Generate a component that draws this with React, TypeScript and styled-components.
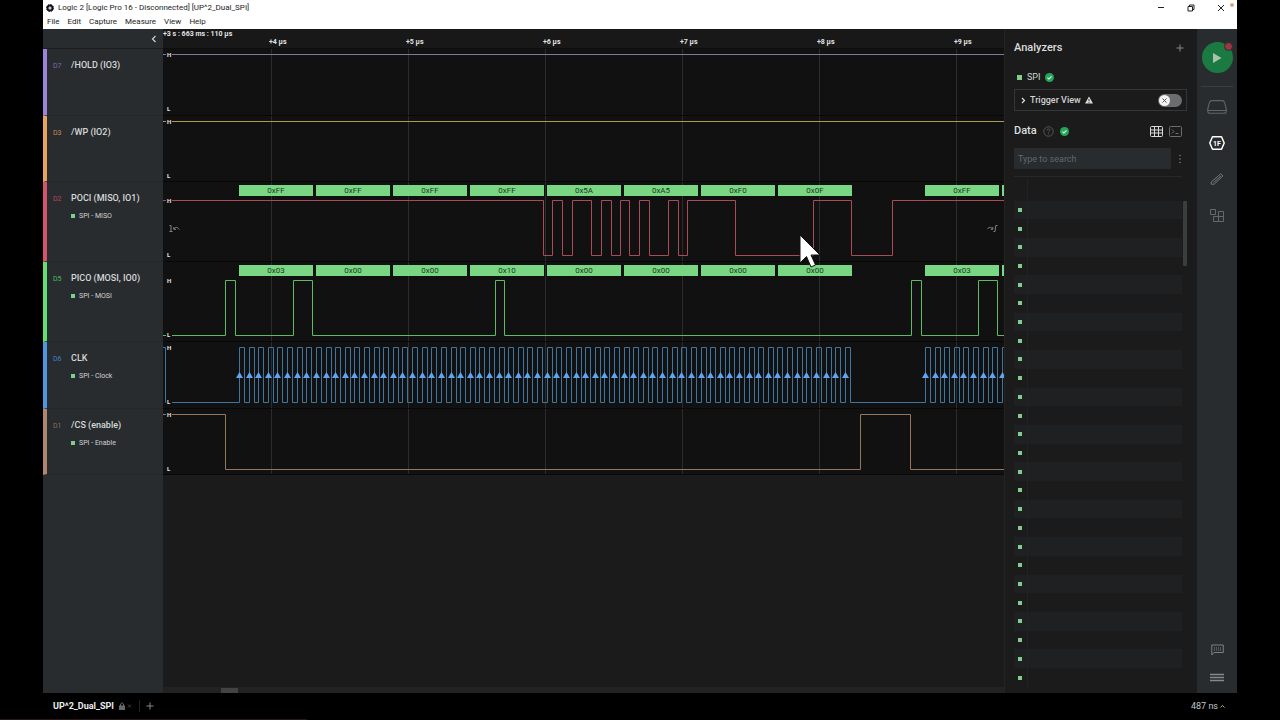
import React from 'react';
import styled, { createGlobalStyle } from 'styled-components';

const GlobalStyle = createGlobalStyle`
  *, *::before, *::after { box-sizing: border-box; }
  body { margin: 0; background: #000; font-family: Roboto, "Liberation Sans", sans-serif; color: #d2d4d5; }
  button { font: inherit; color: inherit; border: 0; padding: 0; margin: 0; background: none; display: flex; align-items: center; justify-content: center; }
  svg { display: block; }
`;

const Page = styled.div`
  display: flex;
  flex-direction: column;
  min-height: 100vh;
  padding: 0 43px;
  background: #000;
`;

const WindowHeader = styled.header`
  height: 29px;
  background: #fff;
  color: #1c1c1c;
  font-size: 8px;
  line-height: 15px;
`;

const TitleBar = styled.div`
  display: flex;
  align-items: center;
  height: 15px;
  padding: 0 0 0 3px;
`;

const Title = styled.h1`
  flex: 1;
  margin: 0 0 0 4px;
  font-size: 8px;
  font-weight: 400;
`;

const WindowButtons = styled.div`
  display: flex;
  align-items: center;
  gap: 17px;
  padding-right: 10px;
`;

const WindowButton = styled.button`
  width: 13px;
  height: 14px;
`;

const RecordingDot = styled.span`
  position: absolute;
  top: 3px;
  right: 46px;
  width: 4px;
  height: 4px;
  border-radius: 50%;
  background: #d8a87c;
`;

const MenuBar = styled.nav`
  display: flex;
  gap: 8px;
  height: 14px;
  padding-left: 4px;
`;

const MenuItem = styled.button`
  height: 14px;
  line-height: 14px;
`;

const Workspace = styled.div`
  flex: 1;
  display: grid;
  grid-template-columns: 120px minmax(0, 1fr) 193px 40px;
`;

const ChannelColumn = styled.aside`
  background: #282c2f;
`;

const ChannelHeader = styled.div`
  display: flex;
  justify-content: flex-end;
  align-items: center;
  height: 20px;
  padding-right: 5px;
  border-bottom: 1px solid #1b1d1f;
`;

const Channel = styled.section<{ $height: number; $color: string }>`
  display: grid;
  grid-template-columns: 18px 1fr;
  align-content: start;
  height: ${p => p.$height}px;
  padding: 10px 0 0 6px;
  border-left: 4px solid ${p => p.$color};
  border-bottom: 1px solid #25282a;
`;

const ChannelId = styled.span<{ $color: string }>`
  font-size: 7px;
  line-height: 14px;
  color: ${p => p.$color};
`;

const ChannelName = styled.h2`
  margin: 0;
  font-size: 9px;
  line-height: 13px;
  font-weight: 500;
  color: #d6d8d9;
`;

const ChannelRole = styled.span`
  grid-column: 2;
  display: flex;
  align-items: center;
  gap: 4px;
  margin-top: 5px;
  font-size: 7px;
  line-height: 10px;
  color: #d0d2d3;
`;

const Marker = styled.span<{ $size?: number }>`
  display: block;
  flex: none;
  width: ${p => p.$size ?? 4}px;
  height: ${p => p.$size ?? 4}px;
  background: #82cd8e;
`;

const Waves = styled.main`
  display: flex;
  flex-direction: column;
  overflow: hidden;
  background: #1b1b1b;
`;

const Ruler = styled.div`
  height: 20px;
  background: #181818;
  color: #e4e4e4;
  font-size: 7px;
  font-weight: 700;
  line-height: 8px;
  border-bottom: 1px solid #0e0e0e;
  white-space: nowrap;
`;

const RulerOrigin = styled.div`
  height: 9px;
  padding-top: 1px;
`;

const Ticks = styled.div`
  display: flex;
  padding-left: 106px;
`;

const Tick = styled.span`
  flex: none;
  width: 137px;
`;

const Lanes = styled.div`
  background: repeating-linear-gradient(to right, #2c2c2c 0 1px, transparent 1px 137px) 108px 0 no-repeat #111;
`;

const Lane = styled.div<{ $height: number }>`
  position: relative;
  height: ${p => p.$height}px;
  border-bottom: 1px solid #080808;
  overflow: hidden;
`;

const Trace = styled.svg`
  width: 100%;
  height: 65px;
`;

const LevelLabel = styled.text`
  fill: #e8e8e8;
  font: 700 6px Roboto, sans-serif;
`;

const Frames = styled.div`
  display: flex;
  gap: 3px;
  height: 13px;
  padding: 3px 0 0 76px;
`;

const Frame = styled.span<{ $afterGap?: boolean }>`
  flex: none;
  width: 74px;
  height: 11px;
  margin-left: ${p => (p.$afterGap ? 70 : 0)}px;
  background: #79d683;
  color: #1d3a21;
  font-size: 8px;
  line-height: 11px;
  text-align: center;
`;

const EdgeJump = styled.button<{ $side: 'left' | 'right' }>`
  position: absolute;
  top: 42px;
  ${p => p.$side}: 6px;
  width: 11px;
  height: 9px;
`;

const ScrollTrack = styled.div`
  height: 6px;
  margin-top: auto;
  padding: 1px 0 0 58px;
  background: #222;
`;

const ScrollThumb = styled.div`
  width: 17px;
  height: 5px;
  background: #434343;
`;

const Panel = styled.aside`
  display: flex;
  flex-direction: column;
  padding: 11px 10px 6px 9px;
  border-left: 1px solid #262222;
  background: #1b1b1b;
`;

const PanelRow = styled.div<{ $gap: number; $top: number; $height: number; $start?: number; $end?: number }>`
  display: flex;
  align-items: center;
  gap: ${p => p.$gap}px;
  height: ${p => p.$height}px;
  margin-top: ${p => p.$top}px;
  padding: 0 ${p => p.$end ?? 0}px 0 ${p => p.$start ?? 0}px;
`;

const PanelTitle = styled.h2`
  margin: 0;
  font-size: 11px;
  line-height: 16px;
  font-weight: 500;
  color: #dcdedf;
`;

const Spacer = styled.span`
  flex: 1;
`;

const AnalyzerName = styled.span`
  font-size: 9px;
`;

const TriggerBox = styled.div`
  display: flex;
  align-items: center;
  gap: 4px;
  height: 22px;
  margin-top: 4px;
  padding: 0 4px 0 6px;
  border: 1px solid #34373a;
  font-size: 9px;
  font-weight: 500;
`;

const Switch = styled.label`
  display: flex;
  position: relative;
`;

const SwitchInput = styled.input`
  appearance: none;
  width: 24px;
  height: 13px;
  margin: 0;
  border-radius: 7px;
  background: #6b6e70;
`;

const SwitchKnob = styled.svg`
  position: absolute;
  left: 1px;
  top: 1px;
`;

const Search = styled.input`
  flex: 1;
  min-width: 0;
  height: 21px;
  padding: 0 4px;
  border: 0;
  border-radius: 1px;
  background: #282c2f;
  color: #d0d0d0;
  font: 9px Roboto, sans-serif;
  &::placeholder { color: #63676a; opacity: 1; }
`;

const Results = styled.div`
  position: relative;
  flex: 1;
  display: flex;
  margin-top: 7px;
  padding-right: 5px;
`;

const ResultTable = styled.table`
  width: 100%;
  border-collapse: collapse;
  border-top: 1px solid #262829;
  th { height: 24px; padding: 0; }
  td { padding: 0; }
  td:first-child, th:first-child { width: 13px; padding-left: 4px; border-right: 1px solid #202223; }
  tbody tr:nth-child(odd) { background: #1e2021; }
`;

const ResultThumb = styled.div`
  position: absolute;
  top: 25px;
  right: 0;
  width: 4px;
  height: 65px;
  border-radius: 1px;
  background: #3c3d3d;
`;

const Rail = styled.nav`
  display: flex;
  flex-direction: column;
  align-items: center;
  padding: 13px 0 8px;
  background: #282c2f;
`;

const StartButton = styled.button`
  position: relative;
  width: 31px;
  height: 31px;
  border-radius: 50%;
  background: #1b7a41;
`;

const StatusDot = styled.span`
  position: absolute;
  top: 0;
  right: 0;
  width: 9px;
  height: 9px;
  border: 1px solid #282c2f;
  border-radius: 50%;
  background: #9b3640;
`;

const RailDivider = styled.hr`
  width: 32px;
  margin: 13px 0 2px;
  border: 0;
  border-top: 1px solid #3a3e41;
`;

const RailButton = styled.button<{ $height?: number }>`
  width: 32px;
  height: ${p => p.$height ?? 36}px;
`;

const StatusBar = styled.footer`
  display: flex;
  align-items: center;
  height: 27px;
  padding: 0 12px 1px 10px;
  font-size: 9px;
`;

const TabName = styled.span`
  margin-right: 5px;
  font-weight: 700;
  color: #eceded;
`;

const TabDivider = styled.span`
  width: 1px;
  height: 12px;
  margin: 0 6px;
  background: #232323;
`;

const Reading = styled.span`
  margin: 0 2px 0 auto;
  color: #c4c4c4;
`;

const Progress = styled.div`
  position: absolute;
  left: 0;
  bottom: 0;
  width: 24%;
  height: 1px;
  background: #2b1517;
`;

const Cursor = styled.svg`
  position: absolute;
  left: 799px;
  top: 234px;
  pointer-events: none;
`;

type ChannelInfo = {
  id: string;
  name: string;
  role?: string;
  color: string;
  idColor: string;
  trace: string;
  height: number;
  start: 0 | 1;
  edges: number[];
  frames?: string[];
  arrows?: number[];
};

/* Rising edges of both clock bursts, in pixels from the left of the capture. */
const burst = (from: number, count: number) =>
  Array.from({ length: count }, (_, i) => Math.round(from + i * 9.615));
const clockRises = [...burst(76, 64), ...burst(762, 12)];
const clockEdges = [2, ...clockRises.flatMap(x => [x, x + 5])];

const channels: ChannelInfo[] = [
  { id: 'D7', name: '/HOLD (IO3)', color: '#9b83dc', idColor: '#7a6bb8', trace: '#7d79a0', height: 67, start: 1, edges: [] },
  { id: 'D3', name: '/WP (IO2)', color: '#e8a45c', idColor: '#c98d50', trace: '#b3975a', height: 66, start: 1, edges: [] },
  {
    id: 'D2', name: 'POCI (MISO, IO1)', role: 'SPI - MISO', color: '#d3546b', idColor: '#b84657', trace: '#a94c58', height: 80, start: 1,
    edges: [380, 389, 399, 409, 428, 438, 448, 457, 466, 476, 486, 505, 515, 524, 572, 650, 688, 729],
    frames: ['0xFF', '0xFF', '0xFF', '0xFF', '0x5A', '0xA5', '0xF0', '0x0F', '0xFF', ''],
  },
  {
    id: 'D5', name: 'PICO (MOSI, IO0)', role: 'SPI - MOSI', color: '#5fe070', idColor: '#4fbc5f', trace: '#5dbb66', height: 80, start: 0,
    edges: [62, 72, 130, 149, 332, 341, 748, 758, 815, 834],
    frames: ['0x03', '0x00', '0x00', '0x10', '0x00', '0x00', '0x00', '0x00', '0x03', ''],
  },
  { id: 'D6', name: 'CLK', role: 'SPI - Clock', color: '#4f96e0', idColor: '#457fc8', trace: '#3f76a0', height: 67, start: 1, edges: clockEdges, arrows: clockRises },
  { id: 'D1', name: '/CS (enable)', role: 'SPI - Enable', color: '#b18670', idColor: '#86705f', trace: '#94765e', height: 66, start: 1, edges: [62, 697, 747] },
];

const HIGH = 5;
const LOW = 60;

function tracePath(start: 0 | 1, edges: number[]) {
  let level = start;
  let d = `M0 ${level ? HIGH : LOW}.5`;
  edges.forEach(x => {
    level = level ? 0 : 1;
    d += `H${x}.5V${level ? HIGH : LOW}.5`;
  });
  return d + 'H4000';
}

const CheckBadge = () => (
  <svg width="9" height="9" viewBox="0 0 18 18" aria-label="ok">
    <circle cx="9" cy="9" r="9" fill="#25a55a" />
    <path d="M5 9.3l2.8 2.8L13 6.6" fill="none" stroke="#eafff0" strokeWidth="2.2" />
  </svg>
);

const PlusIcon = () => (
  <svg width="8" height="8" viewBox="0 0 8 8"><path d="M4 .5v7M.5 4h7" stroke="#85898b" /></svg>
);

const JumpIcon = ({ flip }: { flip?: boolean }) => (
  <svg width="11" height="9" viewBox="0 0 11 9" fill="none" stroke="#8e8e8e" strokeWidth=".9">
    {flip
      ? <path d="M.5 5C2 2.800 4 2.800 5.500 5M5.800 3v2.300H3.800M6.500 7.500h1.500l.8-6h1.700" />
      : <path d="M.5 1.500h1.500v6M.5 7.500h3M5 5C6.500 2.800 8.500 2.800 10.200 5.500M4.800 3v2.300h2.200" />}
  </svg>
);

export default function App() {
  return (
    <Page>
      <GlobalStyle />
      <WindowHeader>
        <TitleBar>
          <svg width="8" height="8" viewBox="0 0 16 16">
            <circle cx="8" cy="8" r="5" fill="none" stroke="#15151f" strokeWidth="4" />
            <circle cx="8" cy="8" r="7" fill="none" stroke="#15151f" strokeWidth="2" strokeDasharray="3 2.500" />
            <circle cx="8" cy="8" r="2" fill="#b9b0cf" />
          </svg>
          <Title>Logic 2 [Logic Pro 16 - Disconnected] [UP^2_Dual_SPI]</Title>
          <WindowButtons>
            <WindowButton aria-label="Minimize">
              <svg width="8" height="8" viewBox="0 0 8 8"><path d="M1 3.500h6" stroke="#222" /></svg>
            </WindowButton>
            <WindowButton aria-label="Restore">
              <svg width="8" height="8" viewBox="0 0 8 8" fill="none" stroke="#222"><path d="M1 2.500h4.500V7H1zM2.500 2.500V1H7v4.500H5.500" /></svg>
            </WindowButton>
            <WindowButton aria-label="Close">
              <svg width="8" height="8" viewBox="0 0 8 8"><path d="M1 1l6 6M7 1L1 7" stroke="#222" /></svg>
            </WindowButton>
          </WindowButtons>
          <RecordingDot />
        </TitleBar>
        <MenuBar>
          {['File', 'Edit', 'Capture', 'Measure', 'View', 'Help'].map(item => <MenuItem key={item}>{item}</MenuItem>)}
        </MenuBar>
      </WindowHeader>

      <Workspace>
        <ChannelColumn>
          <ChannelHeader>
            <button aria-label="Collapse channels">
              <svg width="8" height="8" viewBox="0 0 8 8"><path d="M5.500 1L2.500 4l3 3" fill="none" stroke="#d0d2d3" strokeWidth="1.200" /></svg>
            </button>
          </ChannelHeader>
          {channels.map(c => (
            <Channel key={c.id} $height={c.height} $color={c.color}>
              <ChannelId $color={c.idColor}>{c.id}</ChannelId>
              <ChannelName>{c.name}</ChannelName>
              {c.role && <ChannelRole><Marker />{c.role}</ChannelRole>}
            </Channel>
          ))}
        </ChannelColumn>

        <Waves>
          <Ruler>
            <RulerOrigin>+3 s : 663 ms : 110 µs</RulerOrigin>
            <Ticks>
              {[4, 5, 6, 7, 8, 9].map(n => <Tick key={n}>+{n} µs</Tick>)}
            </Ticks>
          </Ruler>
          <Lanes>
            {channels.map(c => (
              <Lane key={c.id} $height={c.height}>
                {c.frames && (
                  <Frames>
                    {c.frames.map((f, i) => <Frame key={i} $afterGap={i === 8}>{f}</Frame>)}
                  </Frames>
                )}
                <Trace>
                  <path d={tracePath(c.start, c.edges)} fill="none" stroke={c.trace} />
                  {c.arrows?.map(x => <path key={x} d={`M${x + 0.5} 30l3.500 6h-7z`} fill="#62a4ee" />)}
                  <rect x="3" y="2" width="6" height="7" fill="#111" />
                  <rect x="3" y="57" width="6" height="7" fill="#111" />
                  <LevelLabel x="4" y="8">H</LevelLabel>
                  <LevelLabel x="4" y="62">L</LevelLabel>
                </Trace>
                {c.id === 'D2' && (
                  <>
                    <EdgeJump $side="left" aria-label="Previous edge"><JumpIcon /></EdgeJump>
                    <EdgeJump $side="right" aria-label="Next edge"><JumpIcon flip /></EdgeJump>
                  </>
                )}
              </Lane>
            ))}
          </Lanes>
          <ScrollTrack><ScrollThumb /></ScrollTrack>
        </Waves>

        <Panel>
          <PanelRow $gap={4} $top={0} $height={16} $end={3}>
            <PanelTitle>Analyzers</PanelTitle>
            <Spacer />
            <button aria-label="Add analyzer"><PlusIcon /></button>
          </PanelRow>
          <PanelRow $gap={5} $top={13} $height={16} $start={3}>
            <Marker $size={5} />
            <AnalyzerName>SPI</AnalyzerName>
            <CheckBadge />
          </PanelRow>
          <TriggerBox>
            <svg width="5" height="7" viewBox="0 0 5 7"><path d="M1 1l2.500 2.500L1 6" fill="none" stroke="#e0e0e0" strokeWidth="1.200" /></svg>
            <span>Trigger View</span>
            <svg width="8" height="8" viewBox="0 0 16 16"><path d="M8 1l8 14H0z" fill="#dcdcdc" /><path d="M8 6v4.500M8 12v1.700" stroke="#1b1b1b" strokeWidth="1.800" /></svg>
            <Spacer />
            <Switch>
              <SwitchInput type="checkbox" role="switch" aria-label="Trigger View" />
              <SwitchKnob width="11" height="11" viewBox="0 0 22 22">
                <circle cx="11" cy="11" r="11" fill="#f2f2f2" />
                <path d="M7 7l8 8M15 7l-8 8" stroke="#555" strokeWidth="2" />
              </SwitchKnob>
            </Switch>
          </TriggerBox>
          <PanelRow $gap={6} $top={12} $height={16} $end={5}>
            <PanelTitle>Data</PanelTitle>
            <svg width="11" height="11" viewBox="0 0 22 22" fill="none" stroke="#606466" strokeWidth="1.600">
              <circle cx="11" cy="11" r="9.500" />
              <path d="M8 9c0-4 6-4 6-.500 0 2.200-3 2-3 4.500M11 15v2" />
            </svg>
            <CheckBadge />
            <Spacer />
            <button aria-label="Table view">
              <svg width="13" height="11" viewBox="0 0 13 11" fill="none" stroke="#d8dadb">
                <rect x=".5" y=".5" width="12" height="10" rx="1" /><path d="M.5 4h12M.5 7h12M4.500.5v10M8.500.5v10" />
              </svg>
            </button>
            <button aria-label="Terminal view">
              <svg width="13" height="11" viewBox="0 0 13 11" fill="none" stroke="#6a6e70">
                <rect x=".5" y=".5" width="12" height="10" rx="1" /><path d="M3 3.500l2 2-2 2M6.500 7.500h3" />
              </svg>
            </button>
          </PanelRow>
          <PanelRow $gap={7} $top={9} $height={21} $end={5}>
            <Search placeholder="Type to search" aria-label="Search data" />
            <button aria-label="More">
              <svg width="4" height="10" viewBox="0 0 4 10" fill="#777b7d"><circle cx="2" cy="1.500" r=".8" /><circle cx="2" cy="5" r=".8" /><circle cx="2" cy="8.500" r=".8" /></svg>
            </button>
          </PanelRow>
          <Results>
            <ResultTable>
              <thead><tr><th /><th /></tr></thead>
              <tbody>
                {Array.from({ length: 26 }, (_, i) => <tr key={i}><td><Marker /></td><td /></tr>)}
              </tbody>
            </ResultTable>
            <ResultThumb />
          </Results>
        </Panel>

        <Rail>
          <StartButton aria-label="Start">
            <svg width="10" height="10" viewBox="0 0 10 10"><path d="M1 0l8.500 5L1 10z" fill="#a9c3ad" /></svg>
            <StatusDot />
          </StartButton>
          <RailDivider />
          <RailButton aria-label="Device">
            <svg width="20" height="14" viewBox="0 0 20 14" fill="none" stroke="#5f6467" strokeWidth="1.100">
              <path d="M5 .6h10q2 0 2.600 2L19.300 9v2q0 2.300-2.300 2.300H3Q.7 13.300.7 11V9l1.700-6.400Q3 .6 5 .6zM.7 9.300q0 1.200 1.500 1.200h15.600q1.500 0 1.500-1.200" />
            </svg>
          </RailButton>
          <RailButton aria-label="Analyzers">
            <svg width="16" height="14" viewBox="0 0 16 14">
              <path d="M3.500.8h9L15.200 7l-2.700 6.200h-9L.8 7z" fill="none" stroke="#fff" strokeWidth="1.500" strokeLinejoin="round" />
              <text x="8" y="9.500" textAnchor="middle" fill="#fff" fontSize="7" fontWeight="700">1F</text>
            </svg>
          </RailButton>
          <RailButton aria-label="Measurements">
            <svg width="14" height="14" viewBox="0 0 14 14" fill="none" stroke="#74797b" strokeWidth="1">
              <path d="M1.200 10L10.800 1.800l2 2.200L4.200 12.200H1.200zM3.500 10.500l7.500-6.500" />
            </svg>
          </RailButton>
          <RailButton aria-label="Extensions">
            <svg width="14" height="13" viewBox="0 0 14 13" fill="none" stroke="#65696c">
              <path d="M.5.5h5v5h-5zM8.500 2.500h5v5h-5zM3.500 7.500h5v5h-5zM8.500 7.500h5v5h-5z" />
            </svg>
          </RailButton>
          <Spacer />
          <RailButton aria-label="Feedback" $height={38}>
            <svg width="13" height="12" viewBox="0 0 13 12" fill="none" stroke="#7c8082">
              <path d="M.8 11V1h11.500v7.500H3z" /><path d="M3 4h7M3 6h7" strokeDasharray="1 1" />
            </svg>
          </RailButton>
          <RailButton aria-label="Menu" $height={16}>
            <svg width="14" height="9" viewBox="0 0 14 9"><path d="M0 1.500h14M0 4.500h14M0 7.500h14" stroke="#85898b" strokeWidth="1.300" /></svg>
          </RailButton>
        </Rail>
      </Workspace>

      <StatusBar>
        <TabName>UP^2_Dual_SPI</TabName>
        <svg width="6" height="8" viewBox="0 0 6 8"><path d="M0 3.500h6V8H0z" fill="#686868" /><path d="M1.500 4V2Q3-.5 4.500 2v2" fill="none" stroke="#686868" /></svg>
        <button aria-label="Close tab">
          <svg width="8" height="8" viewBox="0 0 8 8"><path d="M3 2.500l3 3M6 2.500l-3 3" stroke="#4c4c4c" strokeWidth=".8" /></svg>
        </button>
        <TabDivider />
        <button aria-label="New tab"><PlusIcon /></button>
        <Reading>487 ns</Reading>
        <svg width="5" height="4" viewBox="0 0 5 4"><path d="M.5 3.500l2-2 2 2" fill="none" stroke="#aaa" /></svg>
      </StatusBar>
      <Progress />
      <Cursor width="22" height="36" viewBox="0 0 22 36">
        <path d="M1 1v28l6.500-6.500L12 33l4.500-2-4.500-10h9z" fill="#fff" stroke="#111" />
      </Cursor>
    </Page>
  );
}
